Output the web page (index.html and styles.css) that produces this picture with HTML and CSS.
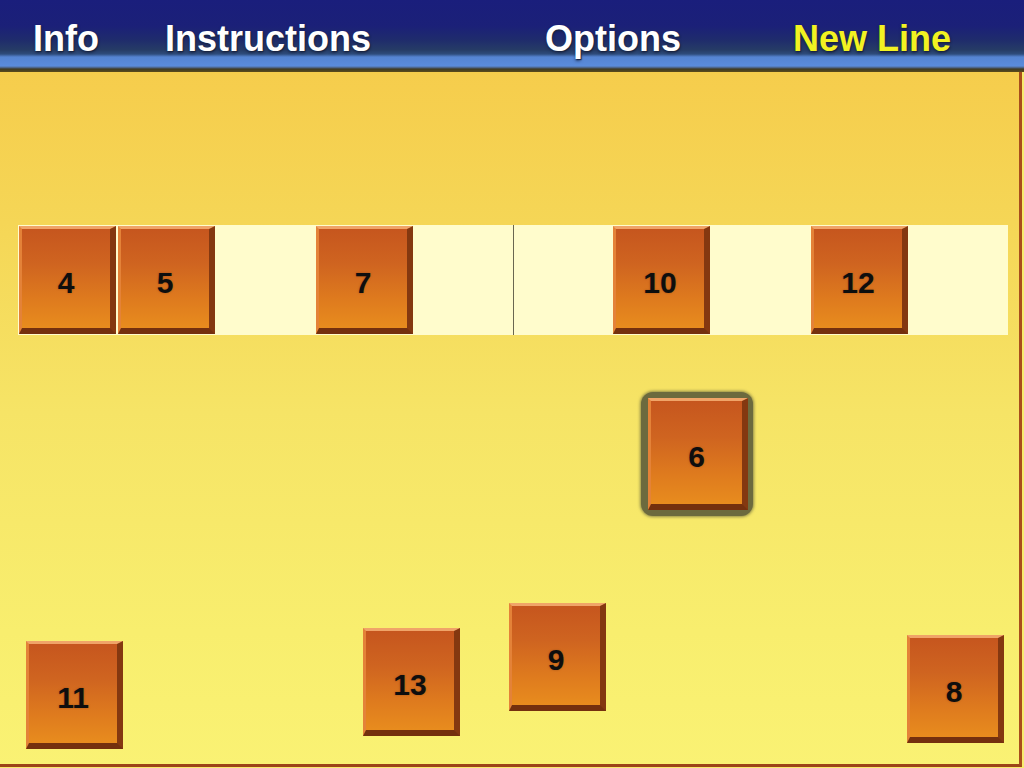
FILE: index.html
```html
<!DOCTYPE html>
<html>
<head>
<meta charset="utf-8">
<link rel="stylesheet" href="styles.css">
</head>
<body>
<div class="app">
  <header class="topbar">
    <span class="nav">Info</span>
    <span class="nav">Instructions</span>
    <span class="nav">Options</span>
    <span class="nav nav-new">New Line</span>
  </header>
  <main class="board">
    <div class="line">
      <div class="slot"><div class="tile">4</div></div>
      <div class="slot"><div class="tile">5</div></div>
      <div class="slot"></div>
      <div class="slot"><div class="tile">7</div></div>
      <div class="slot"></div>
      <div class="slot slot-marked"></div>
      <div class="slot"><div class="tile">10</div></div>
      <div class="slot"></div>
      <div class="slot"><div class="tile">12</div></div>
      <div class="slot"></div>
    </div>
    <div class="free selected" style="left:641px;top:320px"><div class="tile">6</div></div>
    <div class="free" style="left:26px;top:569px"><div class="tile">11</div></div>
    <div class="free" style="left:363px;top:556px"><div class="tile">13</div></div>
    <div class="free" style="left:509px;top:531px"><div class="tile">9</div></div>
    <div class="free" style="left:907px;top:563px"><div class="tile">8</div></div>
  </main>
</div>
</body>
</html>
```

FILE: styles.css
```css
html, body {
  margin: 0;
  padding: 0;
  width: 1024px;
  height: 768px;
  overflow: hidden;
  background: #f7ec6c;
}

.app {
  width: 1024px;
  height: 768px;
  display: flex;
  flex-direction: column;
  font-family: "Liberation Sans", Arial, sans-serif;
}

.topbar {
  height: 72px;
  box-sizing: border-box;
  padding: 21px 0 0 33px;
  display: grid;
  grid-template-columns: 132px 380px 248px auto;
  background: linear-gradient(to bottom,
    #1a1e7c 0px,
    #1b2078 26px,
    #1f2c6c 40px,
    #263c66 50px,
    #2e4c7c 54px,
    #5584d2 57px,
    #5a8cdc 66px,
    #4a5a70 68px,
    #3e3a22 69px,
    #5c4c1c 72px);
}

.nav {
  font-size: 36px;
  line-height: 36px;
  font-weight: bold;
  color: #ffffff;
  white-space: nowrap;
  text-shadow: 1px 1px 1px #1a2440, 0 2px 3px rgba(20, 30, 60, 0.6);
}

.nav-new {
  color: #f2f222;
}

.board {
  flex: 1;
  position: relative;
  background: linear-gradient(to bottom, #f6cd4c 0px, #f5d656 150px, #f6e466 340px, #f8ee6e 560px, #faf274 700px);
  border-right: 3px solid #a84e1c;
  border-bottom: 3px solid #9c4418;
  margin-right: 2px;
  margin-bottom: 1px;
}

.line {
  display: flex;
  margin: 153px 0 0 18px;
}

.slot {
  width: 99px;
  height: 110px;
  box-sizing: border-box;
  padding: 1px;
  background: #fffccc;
}

.slot-marked {
  border-left: 1px solid #6a6650;
}

.tile {
  width: 97px;
  height: 108px;
  box-sizing: border-box;
  border-style: solid;
  border-width: 3px 6px 6px 3px;
  border-color: #f0a468 #843810 #74300e #e48238;
  background: linear-gradient(to bottom, #c6561e 0%, #cf6420 35%, #de7a1e 70%, #e88c1e 100%);
  display: flex;
  align-items: center;
  justify-content: center;
  padding-top: 8px;
  font-family: "Liberation Sans", Arial, sans-serif;
  font-weight: bold;
  font-size: 30px;
  color: #0e0e0e;
  text-shadow: 0 0 2px rgba(120, 60, 20, 0.6);
}

.free {
  position: absolute;
}

.selected {
  width: 112px;
  height: 124px;
  box-sizing: border-box;
  padding: 6px 5px 6px 7px;
  border-radius: 12px;
  background: #6c6a3e;
  box-shadow: 0 0 3px 1px rgba(100, 100, 60, 0.7);
}

.selected .tile {
  width: 100px;
  height: 112px;
}
```
